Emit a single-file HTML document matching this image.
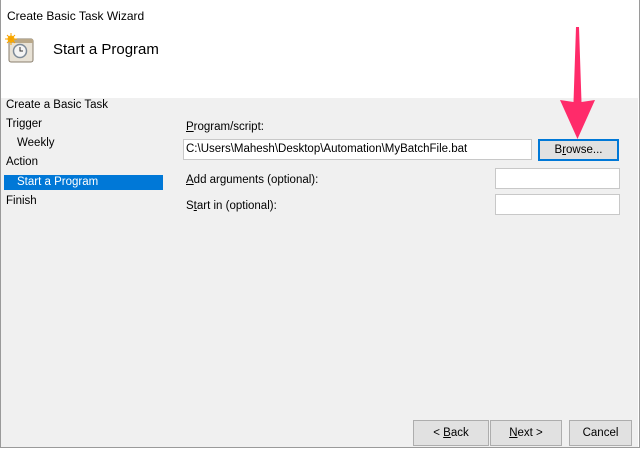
<!DOCTYPE html>
<html><head><style>
body{margin:0;width:640px;height:449px;overflow:hidden;background:#fff;font-family:"Liberation Sans",sans-serif;font-size:11.5px;color:#000;position:relative}
.a{position:absolute;white-space:nowrap}
.box{position:absolute;background:#fff;border:1px solid #c8c8c8;box-sizing:border-box}
.btn{position:absolute;background:#e1e1e1;border:1px solid #adadad;box-sizing:border-box;text-align:center;line-height:24px}
u{text-decoration:underline}
</style></head><body>
<div class="a" style="left:0;top:0;width:638px;height:447px;border:1px solid #9a9a9a;border-top:none"></div>
<div class="a" style="left:7px;top:9px;font-size:12px">Create Basic Task Wizard</div>
<svg class="a" style="left:5px;top:33px" width="32" height="32" viewBox="0 0 32 32">
<rect x="4" y="6" width="24" height="23" rx="2" fill="#e8e2d6" stroke="#8a7f6e"/>
<rect x="4" y="6" width="24" height="4" fill="#b9a88a"/>
<circle cx="15" cy="18" r="6.5" fill="#f4f4f4" stroke="#7d8a98" stroke-width="1.5"/>
<path d="M15 14v4h3" stroke="#333" fill="none"/>
<circle cx="6" cy="6" r="3.5" fill="#f7b500"/>
<path d="M6 0v12M0 6h12M2 2l8 8M10 2l-8 8" stroke="#f7a000" stroke-width="1"/>
</svg>
<div class="a" style="left:53px;top:41px;font-size:15px">Start a Program</div>
<div class="a" style="left:1px;top:98px;width:637px;height:349px;background:#f0f0f0"></div>
<div class="a" style="left:6px;top:98px;line-height:15px">Create a Basic Task</div>
<div class="a" style="left:6px;top:118px">Trigger</div>
<div class="a" style="left:17px;top:137px">Weekly</div>
<div class="a" style="left:6px;top:156px">Action</div>
<div class="a" style="left:4px;top:175px;width:159px;height:15px;background:#0078d7"></div>
<div class="a" style="left:17px;top:176px;color:#fff">Start a Program</div>
<div class="a" style="left:6px;top:195px">Finish</div>
<div class="a" style="left:186px;top:121px"><u>P</u>rogram/script:</div>
<div class="box" style="left:183px;top:139px;width:349px;height:21px"></div>
<div class="a" style="left:186px;top:143px">C:\Users\Mahesh\Desktop\Automation\MyBatchFile.bat</div>
<div class="btn" style="left:538px;top:139px;width:81px;height:22px;line-height:19px;border:2px solid #0078d7">B<u>r</u>owse...</div>
<div class="a" style="left:186px;top:174px"><u>A</u>dd arguments (optional):</div>
<div class="box" style="left:495px;top:168px;width:125px;height:21px"></div>
<div class="a" style="left:186px;top:200px">S<u>t</u>art in (optional):</div>
<div class="box" style="left:495px;top:194px;width:125px;height:21px"></div>
<div class="btn" style="left:413px;top:420px;width:76px;height:26px">&lt; <u>B</u>ack</div>
<div class="btn" style="left:490px;top:420px;width:72px;height:26px"><u>N</u>ext &gt;</div>
<div class="btn" style="left:569px;top:420px;width:63px;height:26px">Cancel</div>
<svg class="a" style="left:555px;top:24px" width="45" height="118" viewBox="0 0 45 118">
<path d="M21 3 L24 3 L26.5 78 L40 76 L22.5 115 L5 76 L18.5 78 Z" fill="#ff2b6a"/>
</svg>
</body></html>
